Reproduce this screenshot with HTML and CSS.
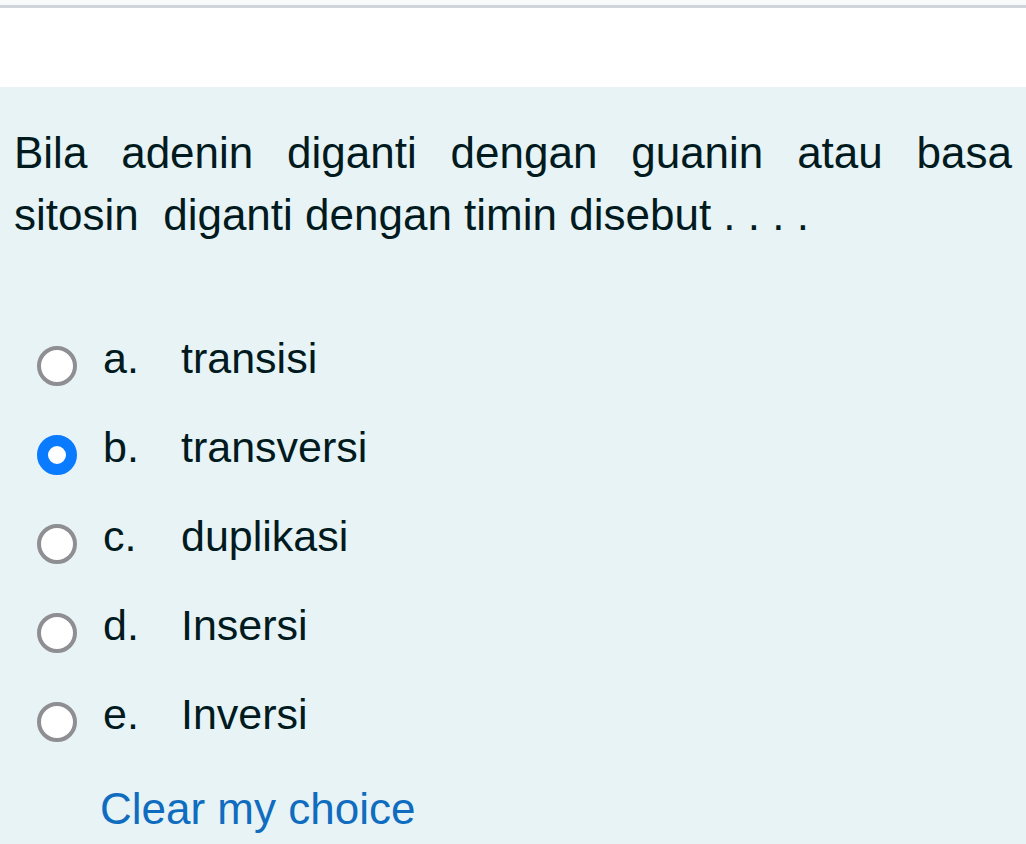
FILE: index.html
```html
<!DOCTYPE html>
<html lang="id">
<head>
<meta charset="utf-8">
<title>Soal</title>
<link rel="stylesheet" href="styles.css">
</head>
<body>
<div class="topbar"></div>
<div class="spacer"></div>
<div class="content">
  <div class="question"><span class="qline">Bila adenin diganti dengan guanin atau basa</span><span class="qline last">sitosin&nbsp; diganti dengan timin disebut . . . .</span></div>
  <div class="answers">
    <div class="option"><span class="radio"></span><span class="label">a.</span><span class="text">transisi</span></div>
    <div class="option"><span class="radio checked"></span><span class="label">b.</span><span class="text">transversi</span></div>
    <div class="option"><span class="radio"></span><span class="label">c.</span><span class="text">duplikasi</span></div>
    <div class="option"><span class="radio"></span><span class="label">d.</span><span class="text">Insersi</span></div>
    <div class="option"><span class="radio"></span><span class="label">e.</span><span class="text">Inversi</span></div>
  </div>
  <a class="clear" href="#">Clear my choice</a>
</div>
</body>
</html>
```
FILE: styles.css
```css
html, body {
  margin: 0;
  padding: 0;
  background: #e7f3f5;
}
body {
  font-family: "Liberation Sans", Arial, sans-serif;
  color: #001a1e;
  height: 844px;
  overflow: hidden;
}
.topbar {
  height: 5px;
  background: #f8f9fa;
  border-bottom: 3px solid #ced4da;
}
.spacer {
  height: 79px;
  background: #ffffff;
}
.content {
  background: #e7f3f5;
  padding: 35px 14px 0 14px;
}
.question {
  font-size: 44px;
  line-height: 62px;
}
.qline {
  display: block;
  text-align: justify;
  text-align-last: justify;
}
.qline.last {
  text-align: left;
  text-align-last: left;
}
.answers {
  margin-top: 67px;
  padding-left: 23px;
}
.option {
  display: flex;
  align-items: center;
  height: 89px;
  font-size: 43px;
  line-height: 50px;
}
.radio {
  box-sizing: border-box;
  width: 40px;
  height: 40px;
  border-radius: 50%;
  border: 4px solid #8e8e93;
  background: #ffffff;
  margin-top: 17px;
  margin-right: 26px;
  flex: none;
}
.radio.checked {
  border: 11px solid #0a7aff;
}
.label {
  width: 78px;
  flex: none;
}
.clear {
  display: block;
  margin-top: 26px;
  margin-left: 86px;
  font-size: 44px;
  line-height: 50px;
  color: #0f6cbf;
  text-decoration: none;
}
```
